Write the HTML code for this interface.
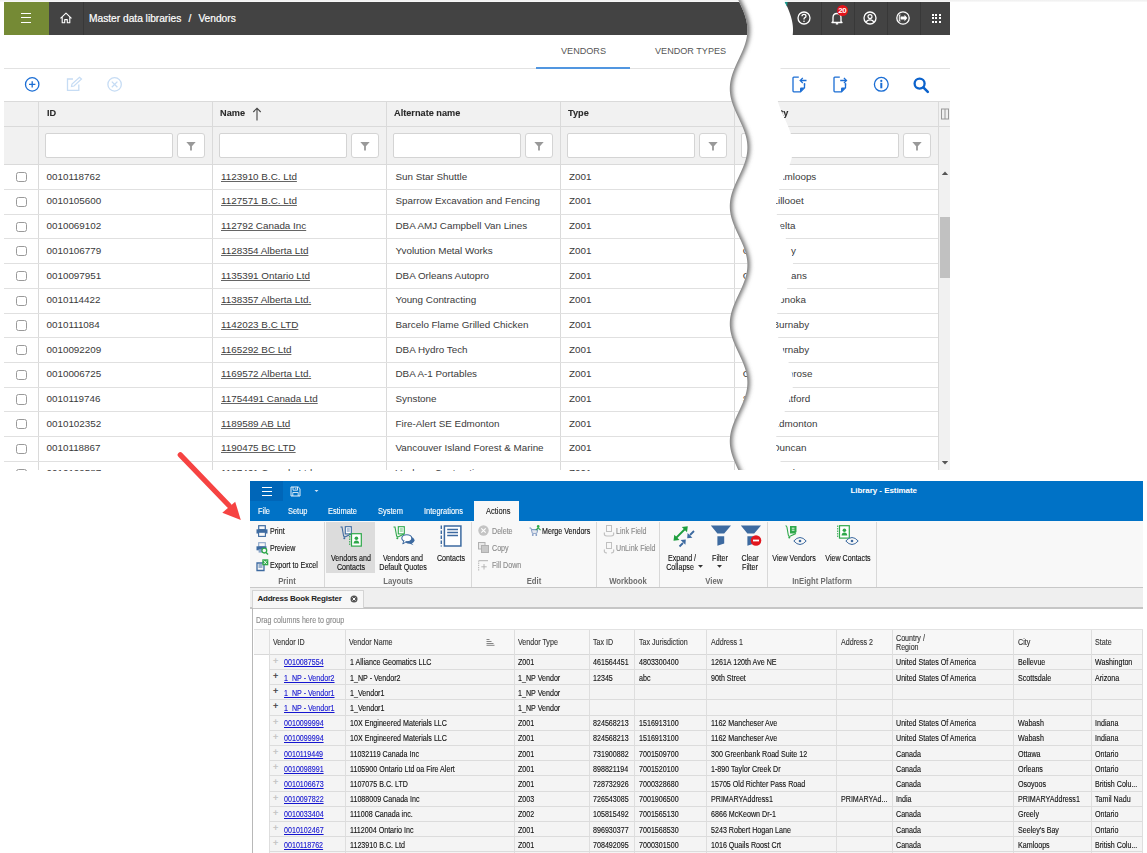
<!DOCTYPE html><html><head><meta charset="utf-8"><style>
*{margin:0;padding:0;box-sizing:border-box}
html,body{width:1147px;height:853px;overflow:hidden;background:#fff;font-family:"Liberation Sans",sans-serif}
.ab{position:absolute}
.t{position:absolute;white-space:nowrap;line-height:1}
.s1{color:#3a3a3a;font-size:9.85px}
.hd{font-weight:bold;color:#2a2a2a;font-size:9.9px;transform:scaleX(.93);transform-origin:0 0;-webkit-text-stroke:0.1px #2a2a2a}
.lk{text-decoration:underline;text-decoration-color:#666}
.g2{font-size:8.4px;transform:scaleX(.85);transform-origin:0 0;color:#111;-webkit-text-stroke:0.12px currentColor}
.gc{transform-origin:50% 0}

</style></head><body>
<div class="ab" style="left:0;top:0;width:1147px;height:2px;background:linear-gradient(#efefef,#fafafa)"></div>
<div class="ab" style="left:4px;top:2px;width:946px;height:32.5px;background:#434343"></div>
<div class="ab" style="left:4px;top:2px;width:45px;height:32.5px;background:#758a35"></div>
<div class="ab" style="left:20.8px;top:13px;width:10.2px;height:1.1px;background:#fff"></div>
<div class="ab" style="left:20.8px;top:17.4px;width:10.2px;height:1.1px;background:#fff"></div>
<div class="ab" style="left:20.8px;top:22px;width:10.2px;height:1.1px;background:#fff"></div>
<div class="ab" style="left:82.5px;top:2px;width:1px;height:32.5px;background:#383838"></div>
<svg class="ab" style="left:59px;top:12px" width="14" height="13" viewBox="0 0 14 13"><path d="M1.5 6.3 L7 1.2 L12.5 6.3 M3.2 5 V10.8 H5.7 V7.6 H8.3 V10.8 H10.8 V5" fill="none" stroke="#fff" stroke-width="1.1" stroke-linejoin="round"/></svg>
<div class="t" style="left:89px;top:13.7px;color:#fff;font-size:10.2px;-webkit-text-stroke:0.2px #fff">Master data libraries</div>
<div class="t" style="left:188.6px;top:13.7px;color:#fff;font-size:10.2px;-webkit-text-stroke:0.2px #fff">/</div>
<div class="t" style="left:198.4px;top:13.7px;color:#fff;font-size:10.2px;-webkit-text-stroke:0.2px #fff">Vendors</div>
<div class="ab" style="left:820.5px;top:2px;width:1px;height:32.5px;background:#383838"></div>
<div class="ab" style="left:853.5px;top:2px;width:1px;height:32.5px;background:#383838"></div>
<div class="ab" style="left:886.7px;top:2px;width:1px;height:32.5px;background:#383838"></div>
<div class="ab" style="left:919.7px;top:2px;width:1px;height:32.5px;background:#383838"></div>
<svg class="ab" style="left:796px;top:10px" width="16" height="16" viewBox="0 0 16 16"><circle cx="8" cy="8" r="6" fill="none" stroke="#fff" stroke-width="1.3"/><path d="M6 6.3 Q6 4.4 8 4.4 Q10 4.4 10 6.2 Q10 7.3 8.6 7.9 Q8 8.2 8 9.4" fill="none" stroke="#fff" stroke-width="1.3"/><circle cx="8" cy="11.3" r="0.8" fill="#fff"/></svg>
<svg class="ab" style="left:829px;top:10px" width="16" height="16" viewBox="0 0 16 16"><path d="M4 11.5 V7.5 Q4 3.5 8 3.5 Q12 3.5 12 7.5 V11.5 L13 12.5 H3 Z" fill="none" stroke="#fff" stroke-width="1.3" stroke-linejoin="round"/><path d="M6.8 13.8 H9.2" stroke="#fff" stroke-width="1.4"/></svg>
<div class="ab" style="left:837.3px;top:5.2px;width:11px;height:11px;border-radius:50%;background:#e3131b"></div>
<div class="t" style="left:838.2px;top:7px;color:#fff;font-size:8px;font-weight:bold;letter-spacing:-0.3px">20</div>
<svg class="ab" style="left:862px;top:10px" width="16" height="16" viewBox="0 0 16 16"><circle cx="8" cy="8" r="6" fill="none" stroke="#fff" stroke-width="1.3"/><circle cx="8" cy="6.6" r="2" fill="none" stroke="#fff" stroke-width="1.2"/><path d="M4.3 12.2 Q5 9.8 8 9.8 Q11 9.8 11.7 12.2" fill="none" stroke="#fff" stroke-width="1.2"/></svg>
<svg class="ab" style="left:895px;top:10px" width="16" height="16" viewBox="0 0 16 16"><circle cx="8" cy="8" r="6.2" fill="none" stroke="#fff" stroke-width="1.3"/><path d="M9.5 4.8 V6.5 H5.5 V9.5 H9.5 V11.2 L12.3 8 Z" fill="#fff"/><path d="M5.5 5 H4.3 V11 H5.5" fill="none" stroke="#fff" stroke-width="1"/></svg>
<div class="ab" style="left:932.0px;top:14.0px;width:2px;height:2px;background:#fff"></div>
<div class="ab" style="left:932.0px;top:17.3px;width:2px;height:2px;background:#fff"></div>
<div class="ab" style="left:932.0px;top:20.6px;width:2px;height:2px;background:#fff"></div>
<div class="ab" style="left:935.3px;top:14.0px;width:2px;height:2px;background:#fff"></div>
<div class="ab" style="left:935.3px;top:17.3px;width:2px;height:2px;background:#fff"></div>
<div class="ab" style="left:935.3px;top:20.6px;width:2px;height:2px;background:#fff"></div>
<div class="ab" style="left:938.6px;top:14.0px;width:2px;height:2px;background:#fff"></div>
<div class="ab" style="left:938.6px;top:17.3px;width:2px;height:2px;background:#fff"></div>
<div class="ab" style="left:938.6px;top:20.6px;width:2px;height:2px;background:#fff"></div>
<div class="t" style="left:561px;top:46.5px;color:#555;font-size:9.1px">VENDORS</div>
<div class="t" style="left:655px;top:46.5px;color:#555;font-size:9.1px">VENDOR TYPES</div>
<div class="ab" style="left:4px;top:68px;width:946px;height:1px;background:#e2e2e2"></div>
<div class="ab" style="left:536px;top:66.5px;width:94px;height:2px;background:#5196e0"></div>
<svg class="ab" style="left:24px;top:76px" width="17" height="17" viewBox="0 0 17 17"><circle cx="8.2" cy="8.4" r="6.7" fill="none" stroke="#1a6dd4" stroke-width="1.3"/><path d="M8.2 5.2 V11.6 M5 8.4 H11.4" stroke="#1a6dd4" stroke-width="1.3"/></svg>
<svg class="ab" style="left:66px;top:76px" width="17" height="17" viewBox="0 0 17 17"><path d="M7 3 H1.5 V14.3 H12.8 V8.5" fill="none" stroke="#c6dcf4" stroke-width="1.3"/><path d="M5.5 10.5 L6 8 L13.5 1.2 L15.5 3 L8 10 Z" fill="none" stroke="#c6dcf4" stroke-width="1.2"/></svg>
<svg class="ab" style="left:106px;top:76px" width="17" height="17" viewBox="0 0 17 17"><circle cx="8.6" cy="8.4" r="6.7" fill="none" stroke="#c6dcf4" stroke-width="1.3"/><path d="M5.8 5.6 L11.4 11.2 M11.4 5.6 L5.8 11.2" stroke="#c6dcf4" stroke-width="1.3"/></svg>
<svg class="ab" style="left:791.5px;top:75.5px" width="16" height="17" viewBox="0 0 16 17"><path d="M6.8 1.2 H1.8 Q1 1.2 1 2 V15 Q1 15.8 1.8 15.8 H8.6 L12.5 11.9 V7.5" fill="none" stroke="#1a6dd4" stroke-width="1.3" stroke-linejoin="round"/><path d="M8 15.9 V12.6 Q8 11.4 9.2 11.4 H12.6 Z" fill="#1a6dd4"/><path d="M12.5 7.2 V9.5" stroke="#1a6dd4" stroke-width="1.3"/><path d="M14.5 4.5 H8.2 M10.8 1.9 L8.2 4.5 L10.8 7.1" fill="none" stroke="#1a6dd4" stroke-width="1.3"/></svg>
<svg class="ab" style="left:832.5px;top:75.5px" width="16" height="17" viewBox="0 0 16 17"><path d="M6.8 1.2 H1.8 Q1 1.2 1 2 V15 Q1 15.8 1.8 15.8 H8.6 L12.5 11.9 V7.5" fill="none" stroke="#1a6dd4" stroke-width="1.3" stroke-linejoin="round"/><path d="M8 15.9 V12.6 Q8 11.4 9.2 11.4 H12.6 Z" fill="#1a6dd4"/><path d="M12.5 7.2 V9.5" stroke="#1a6dd4" stroke-width="1.3"/><path d="M7.2 4.5 H13.5 M10.9 1.9 L13.5 4.5 L10.9 7.1" fill="none" stroke="#1a6dd4" stroke-width="1.3"/></svg>
<svg class="ab" style="left:872.5px;top:75.5px" width="17" height="17" viewBox="0 0 17 17"><circle cx="8.3" cy="8.3" r="6.9" fill="none" stroke="#1a6dd4" stroke-width="1.3"/><circle cx="8.3" cy="4.9" r="1.1" fill="#1a6dd4"/><path d="M8.3 6.8 V12.3" stroke="#1a6dd4" stroke-width="2"/></svg>
<svg class="ab" style="left:913px;top:76.5px" width="17" height="17" viewBox="0 0 17 17"><circle cx="6.6" cy="6.6" r="5" fill="none" stroke="#0b62cc" stroke-width="2.3"/><path d="M10.3 10.3 L14.8 14.8" stroke="#0b62cc" stroke-width="2.6" stroke-linecap="round"/></svg>
<div class="ab" style="left:4px;top:101px;width:946px;height:63px;background:#f1f1f1"></div>
<div class="ab" style="left:4px;top:101px;width:946px;height:1px;background:#dadada"></div>
<div class="ab" style="left:4px;top:126px;width:946px;height:1px;background:#dadada"></div>
<div class="ab" style="left:4px;top:163.5px;width:946px;height:1px;background:#dadada"></div>
<div class="ab" style="left:938.3px;top:164px;width:11.7px;height:306px;background:#f1f1f1"></div>
<div class="ab" style="left:38px;top:101px;width:1px;height:369px;background:#dadada"></div>
<div class="ab" style="left:212px;top:101px;width:1px;height:369px;background:#dadada"></div>
<div class="ab" style="left:386px;top:101px;width:1px;height:369px;background:#dadada"></div>
<div class="ab" style="left:560px;top:101px;width:1px;height:369px;background:#dadada"></div>
<div class="ab" style="left:734px;top:101px;width:1px;height:369px;background:#dadada"></div>
<div class="ab" style="left:938px;top:101px;width:1px;height:369px;background:#dadada"></div>
<div class="t hd" style="left:46.5px;top:108.3px">ID</div>
<div class="t hd" style="left:219.6px;top:108.3px">Name</div>
<div class="t hd" style="left:393.5px;top:108.3px">Alternate name</div>
<div class="t hd" style="left:567.6px;top:108.3px">Type</div>
<div class="t hd" style="left:771px;top:108.3px">City</div>
<svg class="ab" style="left:251px;top:106px" width="12" height="16" viewBox="0 0 12 16"><path d="M6 14.5 V2.5 M2.3 6 L6 2.2 L9.7 6" fill="none" stroke="#444" stroke-width="1.1"/></svg>
<svg class="ab" style="left:940px;top:108px" width="10" height="12" viewBox="0 0 10 12"><rect x="1.5" y="1" width="7" height="10" fill="none" stroke="#999" stroke-width="1"/><path d="M5 1 V11" stroke="#999" stroke-width="1"/></svg>
<div class="ab" style="left:45px;top:133.3px;width:127.5px;height:24.5px;background:#fff;border:1px solid #d4d4d4;border-radius:2px"></div>
<div class="ab" style="left:177px;top:133.3px;width:28px;height:24.5px;background:#fff;border:1px solid #d4d4d4;border-radius:3px"></div>
<svg class="ab" style="left:185.0px;top:139.5px" width="12" height="12" viewBox="0 0 12 12"><path d="M1.3 2 H10.7 L6.9 6.3 V10.5 H5.1 V6.3 Z" fill="#999"/></svg>
<div class="ab" style="left:219px;top:133.3px;width:127.5px;height:24.5px;background:#fff;border:1px solid #d4d4d4;border-radius:2px"></div>
<div class="ab" style="left:351px;top:133.3px;width:28px;height:24.5px;background:#fff;border:1px solid #d4d4d4;border-radius:3px"></div>
<svg class="ab" style="left:359.0px;top:139.5px" width="12" height="12" viewBox="0 0 12 12"><path d="M1.3 2 H10.7 L6.9 6.3 V10.5 H5.1 V6.3 Z" fill="#999"/></svg>
<div class="ab" style="left:393px;top:133.3px;width:127.5px;height:24.5px;background:#fff;border:1px solid #d4d4d4;border-radius:2px"></div>
<div class="ab" style="left:525px;top:133.3px;width:28px;height:24.5px;background:#fff;border:1px solid #d4d4d4;border-radius:3px"></div>
<svg class="ab" style="left:533.0px;top:139.5px" width="12" height="12" viewBox="0 0 12 12"><path d="M1.3 2 H10.7 L6.9 6.3 V10.5 H5.1 V6.3 Z" fill="#999"/></svg>
<div class="ab" style="left:567px;top:133.3px;width:127.5px;height:24.5px;background:#fff;border:1px solid #d4d4d4;border-radius:2px"></div>
<div class="ab" style="left:699px;top:133.3px;width:28px;height:24.5px;background:#fff;border:1px solid #d4d4d4;border-radius:3px"></div>
<svg class="ab" style="left:707.0px;top:139.5px" width="12" height="12" viewBox="0 0 12 12"><path d="M1.3 2 H10.7 L6.9 6.3 V10.5 H5.1 V6.3 Z" fill="#999"/></svg>
<div class="ab" style="left:741px;top:133.3px;width:157.5px;height:24.5px;background:#fff;border:1px solid #d4d4d4;border-radius:2px"></div>
<div class="ab" style="left:903px;top:133.3px;width:28px;height:24.5px;background:#fff;border:1px solid #d4d4d4;border-radius:3px"></div>
<svg class="ab" style="left:911.0px;top:139.5px" width="12" height="12" viewBox="0 0 12 12"><path d="M1.3 2 H10.7 L6.9 6.3 V10.5 H5.1 V6.3 Z" fill="#999"/></svg>
<div class="ab" style="left:4px;top:189.0px;width:934px;height:1px;background:#e0e0e0"></div>
<div class="ab" style="left:16.2px;top:172.1px;width:10.5px;height:10.3px;border:1.2px solid #9a9a9a;border-radius:2.5px"></div>
<div class="t s1" style="left:46.5px;top:171.7px">0010118762</div>
<div class="t s1 lk" style="left:221px;top:171.7px">1123910 B.C. Ltd</div>
<div class="t s1" style="left:395.5px;top:171.7px">Sun Star Shuttle</div>
<div class="t s1" style="left:569px;top:171.7px">Z001</div>
<div class="t s1" style="left:772.5px;top:171.7px">Kamloops</div>
<div class="ab" style="left:4px;top:213.7px;width:934px;height:1px;background:#e0e0e0"></div>
<div class="ab" style="left:16.2px;top:196.79999999999998px;width:10.5px;height:10.3px;border:1.2px solid #9a9a9a;border-radius:2.5px"></div>
<div class="t s1" style="left:46.5px;top:196.39999999999998px">0010105600</div>
<div class="t s1 lk" style="left:221px;top:196.39999999999998px">1127571 B.C. Ltd</div>
<div class="t s1" style="left:395.5px;top:196.39999999999998px">Sparrow Excavation and Fencing</div>
<div class="t s1" style="left:569px;top:196.39999999999998px">Z001</div>
<div class="t s1" style="left:772.5px;top:196.39999999999998px">Lillooet</div>
<div class="ab" style="left:4px;top:238.4px;width:934px;height:1px;background:#e0e0e0"></div>
<div class="ab" style="left:16.2px;top:221.5px;width:10.5px;height:10.3px;border:1.2px solid #9a9a9a;border-radius:2.5px"></div>
<div class="t s1" style="left:46.5px;top:221.1px">0010069102</div>
<div class="t s1 lk" style="left:221px;top:221.1px">112792 Canada Inc</div>
<div class="t s1" style="left:395.5px;top:221.1px">DBA AMJ Campbell Van Lines</div>
<div class="t s1" style="left:569px;top:221.1px">Z001</div>
<div class="t s1" style="left:772.5px;top:221.1px">Delta</div>
<div class="ab" style="left:4px;top:263.1px;width:934px;height:1px;background:#e0e0e0"></div>
<div class="ab" style="left:16.2px;top:246.20000000000002px;width:10.5px;height:10.3px;border:1.2px solid #9a9a9a;border-radius:2.5px"></div>
<div class="t s1" style="left:46.5px;top:245.79999999999998px">0010106779</div>
<div class="t s1 lk" style="left:221px;top:245.79999999999998px">1128354 Alberta Ltd</div>
<div class="t s1" style="left:395.5px;top:245.79999999999998px">Yvolution Metal Works</div>
<div class="t s1" style="left:569px;top:245.79999999999998px">Z001</div>
<div class="t s1" style="left:791px;top:245.79999999999998px">y</div>
<div class="t s1" style="left:742.8px;top:245.79999999999998px">C</div>
<div class="ab" style="left:4px;top:287.8px;width:934px;height:1px;background:#e0e0e0"></div>
<div class="ab" style="left:16.2px;top:270.90000000000003px;width:10.5px;height:10.3px;border:1.2px solid #9a9a9a;border-radius:2.5px"></div>
<div class="t s1" style="left:46.5px;top:270.5px">0010097951</div>
<div class="t s1 lk" style="left:221px;top:270.5px">1135391 Ontario Ltd</div>
<div class="t s1" style="left:395.5px;top:270.5px">DBA Orleans Autopro</div>
<div class="t s1" style="left:569px;top:270.5px">Z001</div>
<div class="t s1" style="left:772.5px;top:270.5px">Orleans</div>
<div class="t s1" style="left:742.8px;top:270.5px">C</div>
<div class="ab" style="left:4px;top:312.5px;width:934px;height:1px;background:#e0e0e0"></div>
<div class="ab" style="left:16.2px;top:295.6px;width:10.5px;height:10.3px;border:1.2px solid #9a9a9a;border-radius:2.5px"></div>
<div class="t s1" style="left:46.5px;top:295.2px">0010114422</div>
<div class="t s1 lk" style="left:221px;top:295.2px">1138357 Alberta Ltd.</div>
<div class="t s1" style="left:395.5px;top:295.2px">Young Contracting</div>
<div class="t s1" style="left:569px;top:295.2px">Z001</div>
<div class="t s1" style="left:772.5px;top:295.2px">Ponoka</div>
<div class="ab" style="left:4px;top:337.2px;width:934px;height:1px;background:#e0e0e0"></div>
<div class="ab" style="left:16.2px;top:320.3px;width:10.5px;height:10.3px;border:1.2px solid #9a9a9a;border-radius:2.5px"></div>
<div class="t s1" style="left:46.5px;top:319.9px">0010111084</div>
<div class="t s1 lk" style="left:221px;top:319.9px">1142023 B.C LTD</div>
<div class="t s1" style="left:395.5px;top:319.9px">Barcelo Flame Grilled Chicken</div>
<div class="t s1" style="left:569px;top:319.9px">Z001</div>
<div class="t s1" style="left:772.5px;top:319.9px">Burnaby</div>
<div class="ab" style="left:4px;top:361.9px;width:934px;height:1px;background:#e0e0e0"></div>
<div class="ab" style="left:16.2px;top:345.0px;width:10.5px;height:10.3px;border:1.2px solid #9a9a9a;border-radius:2.5px"></div>
<div class="t s1" style="left:46.5px;top:344.6px">0010092209</div>
<div class="t s1 lk" style="left:221px;top:344.6px">1165292 BC Ltd</div>
<div class="t s1" style="left:395.5px;top:344.6px">DBA Hydro Tech</div>
<div class="t s1" style="left:569px;top:344.6px">Z001</div>
<div class="t s1" style="left:772.5px;top:344.6px">Burnaby</div>
<div class="ab" style="left:4px;top:386.6px;width:934px;height:1px;background:#e0e0e0"></div>
<div class="ab" style="left:16.2px;top:369.70000000000005px;width:10.5px;height:10.3px;border:1.2px solid #9a9a9a;border-radius:2.5px"></div>
<div class="t s1" style="left:46.5px;top:369.29999999999995px">0010006725</div>
<div class="t s1 lk" style="left:221px;top:369.29999999999995px">1169572 Alberta Ltd.</div>
<div class="t s1" style="left:395.5px;top:369.29999999999995px">DBA A-1 Portables</div>
<div class="t s1" style="left:569px;top:369.29999999999995px">Z001</div>
<div class="t s1" style="left:772.5px;top:369.29999999999995px">Camrose</div>
<div class="t s1" style="left:742.8px;top:369.29999999999995px">C</div>
<div class="ab" style="left:4px;top:411.29999999999995px;width:934px;height:1px;background:#e0e0e0"></div>
<div class="ab" style="left:16.2px;top:394.4px;width:10.5px;height:10.3px;border:1.2px solid #9a9a9a;border-radius:2.5px"></div>
<div class="t s1" style="left:46.5px;top:394.0px">0010119746</div>
<div class="t s1 lk" style="left:221px;top:394.0px">11754491 Canada Ltd</div>
<div class="t s1" style="left:395.5px;top:394.0px">Synstone</div>
<div class="t s1" style="left:569px;top:394.0px">Z001</div>
<div class="t s1" style="left:772.5px;top:394.0px">Stratford</div>
<div class="t s1" style="left:742.8px;top:394.0px">S</div>
<div class="ab" style="left:4px;top:436.0px;width:934px;height:1px;background:#e0e0e0"></div>
<div class="ab" style="left:16.2px;top:419.1px;width:10.5px;height:10.3px;border:1.2px solid #9a9a9a;border-radius:2.5px"></div>
<div class="t s1" style="left:46.5px;top:418.7px">0010102352</div>
<div class="t s1 lk" style="left:221px;top:418.7px">1189589 AB Ltd</div>
<div class="t s1" style="left:395.5px;top:418.7px">Fire-Alert SE Edmonton</div>
<div class="t s1" style="left:569px;top:418.7px">Z001</div>
<div class="t s1" style="left:772.5px;top:418.7px">Edmonton</div>
<div class="ab" style="left:4px;top:460.7px;width:934px;height:1px;background:#e0e0e0"></div>
<div class="ab" style="left:16.2px;top:443.8px;width:10.5px;height:10.3px;border:1.2px solid #9a9a9a;border-radius:2.5px"></div>
<div class="t s1" style="left:46.5px;top:443.4px">0010118867</div>
<div class="t s1 lk" style="left:221px;top:443.4px">1190475 BC LTD</div>
<div class="t s1" style="left:395.5px;top:443.4px">Vancouver Island Forest &amp; Marine</div>
<div class="t s1" style="left:569px;top:443.4px">Z001</div>
<div class="t s1" style="left:772.5px;top:443.4px">Duncan</div>
<div class="ab" style="left:4px;top:485.4px;width:934px;height:1px;background:#e0e0e0"></div>
<div class="ab" style="left:16.2px;top:468.5px;width:10.5px;height:10.3px;border:1.2px solid #9a9a9a;border-radius:2.5px"></div>
<div class="t s1" style="left:46.5px;top:468.09999999999997px">0010109587</div>
<div class="t s1 lk" style="left:221px;top:468.09999999999997px">1197461 Canada Ltd</div>
<div class="t s1" style="left:395.5px;top:468.09999999999997px">Vanhorn Contracting</div>
<div class="t s1" style="left:569px;top:468.09999999999997px">Z001</div>
<div class="t s1" style="left:772.5px;top:468.09999999999997px">Kamloops</div>
<svg class="ab" style="left:941px;top:169.5px" width="8" height="6" viewBox="0 0 8 6"><path d="M0.8 5 L4 1.5 L7.2 5 Z" fill="#555"/></svg>
<div class="ab" style="left:940px;top:216.5px;width:10px;height:61.7px;background:#c1c1c1"></div>
<svg class="ab" style="left:941px;top:459.5px" width="8" height="6" viewBox="0 0 8 6"><path d="M0.8 1 L4 4.5 L7.2 1 Z" fill="#555"/></svg>
<div class="ab" style="left:0;top:470.6px;width:1147px;height:384px;background:#fff"></div>
<div class="ab" style="left:950px;top:2px;width:197px;height:470px;background:#fff"></div>
<div class="ab" style="left:0;top:2px;width:4px;height:470px;background:#fff"></div>
<svg class="ab" style="left:0;top:0" width="1147" height="480" viewBox="0 0 1147 480">
<defs><filter id="bl" x="-50%" y="-10%" width="200%" height="120%"><feGaussianBlur stdDeviation="1.9"/></filter>
<clipPath id="gap"><polygon points="738.31,0 738.78,1 739.25,2 739.71,3 740.18,4 740.64,5 741.09,6 741.54,7 741.98,8 742.41,9 742.83,10 743.24,11 743.63,12 744.01,13 744.37,14 744.72,15 745.05,16 745.36,17 745.65,18 745.92,19 746.17,20 746.40,21 746.61,22 746.79,23 746.95,24 747.09,25 747.20,26 747.29,27 747.35,28 747.39,29 747.40,30 747.39,31 747.35,32 747.29,33 747.20,34 747.09,35 746.95,36 746.79,37 746.61,38 746.40,39 746.17,40 745.92,41 745.65,42 745.36,43 745.05,44 744.72,45 744.37,46 744.01,47 743.63,48 743.24,49 742.83,50 742.41,51 741.98,52 741.54,53 741.09,54 740.64,55 740.18,56 739.71,57 739.25,58 738.78,59 738.31,60 737.84,61 737.37,62 736.90,63 736.45,64 735.99,65 735.55,66 735.11,67 734.68,68 734.27,69 733.86,70 733.48,71 733.10,72 732.74,73 732.40,74 732.07,75 731.77,76 731.48,77 731.21,78 730.97,79 730.75,80 730.54,81 730.37,82 730.21,83 730.08,84 729.98,85 729.89,86 729.84,87 729.81,88 729.80,89 729.82,90 729.86,91 729.93,92 730.03,93 730.14,94 730.29,95 730.45,96 730.64,97 730.85,98 731.09,99 731.34,100 731.62,101 731.92,102 732.23,103 732.57,104 732.92,105 733.29,106 733.67,107 734.06,108 734.47,109 734.90,110 735.33,111 735.77,112 736.22,113 736.67,114 737.14,115 737.60,116 738.07,117 738.54,118 739.01,119 739.48,120 739.95,121 740.41,122 740.87,123 741.32,124 741.76,125 742.20,126 742.62,127 743.03,128 743.43,129 743.82,130 744.19,131 744.55,132 744.88,133 745.20,134 745.51,135 745.79,136 746.05,137 746.29,138 746.51,139 746.70,140 746.87,141 747.02,142 747.15,143 747.25,144 747.32,145 747.37,146 747.40,147 747.40,148 747.37,149 747.32,150 747.25,151 747.15,152 747.02,153 746.87,154 746.70,155 746.51,156 746.29,157 746.05,158 745.79,159 745.51,160 745.20,161 744.88,162 744.55,163 744.19,164 743.82,165 743.43,166 743.03,167 742.62,168 742.20,169 741.76,170 741.32,171 740.87,172 740.41,173 739.95,174 739.48,175 739.01,176 738.54,177 738.07,178 737.60,179 737.14,180 736.67,181 736.22,182 735.77,183 735.33,184 734.90,185 734.47,186 734.06,187 733.67,188 733.29,189 732.92,190 732.57,191 732.23,192 731.92,193 731.62,194 731.34,195 731.09,196 730.85,197 730.64,198 730.45,199 730.29,200 730.14,201 730.03,202 729.93,203 729.86,204 729.82,205 729.80,206 729.81,207 729.84,208 729.89,209 729.98,210 730.08,211 730.21,212 730.37,213 730.54,214 730.75,215 730.97,216 731.21,217 731.48,218 731.77,219 732.07,220 732.40,221 732.74,222 733.10,223 733.48,224 733.86,225 734.27,226 734.68,227 735.11,228 735.55,229 735.99,230 736.45,231 736.90,232 737.37,233 737.84,234 738.31,235 738.78,236 739.25,237 739.71,238 740.18,239 740.64,240 741.09,241 741.54,242 741.98,243 742.41,244 742.83,245 743.24,246 743.63,247 744.01,248 744.37,249 744.72,250 745.05,251 745.36,252 745.65,253 745.92,254 746.17,255 746.40,256 746.61,257 746.79,258 746.95,259 747.09,260 747.20,261 747.29,262 747.35,263 747.39,264 747.40,265 747.39,266 747.35,267 747.29,268 747.20,269 747.09,270 746.95,271 746.79,272 746.61,273 746.40,274 746.17,275 745.92,276 745.65,277 745.36,278 745.05,279 744.72,280 744.37,281 744.01,282 743.63,283 743.24,284 742.83,285 742.41,286 741.98,287 741.54,288 741.09,289 740.64,290 740.18,291 739.71,292 739.25,293 738.78,294 738.31,295 737.84,296 737.37,297 736.90,298 736.45,299 735.99,300 735.55,301 735.11,302 734.68,303 734.27,304 733.86,305 733.48,306 733.10,307 732.74,308 732.40,309 732.07,310 731.77,311 731.48,312 731.21,313 730.97,314 730.75,315 730.54,316 730.37,317 730.21,318 730.08,319 729.98,320 729.89,321 729.84,322 729.81,323 729.80,324 729.82,325 729.86,326 729.93,327 730.03,328 730.14,329 730.29,330 730.45,331 730.64,332 730.85,333 731.09,334 731.34,335 731.62,336 731.92,337 732.23,338 732.57,339 732.92,340 733.29,341 733.67,342 734.06,343 734.47,344 734.90,345 735.33,346 735.77,347 736.22,348 736.67,349 737.14,350 737.60,351 738.07,352 738.54,353 739.01,354 739.48,355 739.95,356 740.41,357 740.87,358 741.32,359 741.76,360 742.20,361 742.62,362 743.03,363 743.43,364 743.82,365 744.19,366 744.55,367 744.88,368 745.20,369 745.51,370 745.79,371 746.05,372 746.29,373 746.51,374 746.70,375 746.87,376 747.02,377 747.15,378 747.25,379 747.32,380 747.37,381 747.40,382 747.40,383 747.37,384 747.32,385 747.25,386 747.15,387 747.02,388 746.87,389 746.70,390 746.51,391 746.29,392 746.05,393 745.79,394 745.51,395 745.20,396 744.88,397 744.55,398 744.19,399 743.82,400 743.43,401 743.03,402 742.62,403 742.20,404 741.76,405 741.32,406 740.87,407 740.41,408 739.95,409 739.48,410 739.01,411 738.54,412 738.07,413 737.60,414 737.14,415 736.67,416 736.22,417 735.77,418 735.33,419 734.90,420 734.47,421 734.06,422 733.67,423 733.29,424 732.92,425 732.57,426 732.23,427 731.92,428 731.62,429 731.34,430 731.09,431 730.85,432 730.64,433 730.45,434 730.29,435 730.14,436 730.03,437 729.93,438 729.86,439 729.82,440 729.80,441 729.81,442 729.84,443 729.89,444 729.98,445 730.08,446 730.21,447 730.37,448 730.54,449 730.75,450 730.97,451 731.21,452 731.48,453 731.77,454 732.07,455 732.40,456 732.74,457 733.10,458 733.48,459 733.86,460 734.27,461 734.68,462 735.11,463 735.55,464 735.99,465 736.45,466 736.90,467 737.37,468 737.84,469 738.31,470 738.78,471 739.25,472 739.71,473 740.18,474 740.64,475 741.09,476 741.54,477 741.98,478 742.41,479 742.83,480 788.58,480 788.18,479 787.77,478 787.34,477 786.91,476 786.47,475 786.03,474 785.58,473 785.12,472 784.67,471 784.22,470 783.76,469 783.31,468 782.86,467 782.42,466 781.98,465 781.55,464 781.13,463 780.72,462 780.32,461 779.93,460 779.55,459 779.19,458 778.84,457 778.51,456 778.20,455 777.90,454 777.62,453 777.37,452 777.13,451 776.91,450 776.72,449 776.55,448 776.40,447 776.27,446 776.17,445 776.09,444 776.04,443 776.01,442 776.00,441 776.02,440 776.06,439 776.13,438 776.22,437 776.33,436 776.47,435 776.63,434 776.81,433 777.02,432 777.25,431 777.49,430 777.76,429 778.05,428 778.35,427 778.67,426 779.01,425 779.37,424 779.74,423 780.12,422 780.52,421 780.92,420 781.34,419 781.77,418 782.20,417 782.64,416 783.09,415 783.54,414 783.99,413 784.44,412 784.90,411 785.35,410 785.80,409 786.25,408 786.69,407 787.13,406 787.55,405 787.97,404 788.38,403 788.78,402 789.17,401 789.54,400 789.90,399 790.24,398 790.57,397 790.88,396 791.17,395 791.44,394 791.69,393 791.93,392 792.14,391 792.33,390 792.49,389 792.64,388 792.76,387 792.85,386 792.92,385 792.97,384 793.00,383 793.00,382 792.97,381 792.92,380 792.85,379 792.76,378 792.64,377 792.49,376 792.33,375 792.14,374 791.93,373 791.69,372 791.44,371 791.17,370 790.88,369 790.57,368 790.24,367 789.90,366 789.54,365 789.17,364 788.78,363 788.38,362 787.97,361 787.55,360 787.13,359 786.69,358 786.25,357 785.80,356 785.35,355 784.90,354 784.44,353 783.99,352 783.54,351 783.09,350 782.64,349 782.20,348 781.77,347 781.34,346 780.92,345 780.52,344 780.12,343 779.74,342 779.37,341 779.01,340 778.67,339 778.35,338 778.05,337 777.76,336 777.49,335 777.25,334 777.02,333 776.81,332 776.63,331 776.47,330 776.33,329 776.22,328 776.13,327 776.06,326 776.02,325 776.00,324 776.01,323 776.04,322 776.09,321 776.17,320 776.27,319 776.40,318 776.55,317 776.72,316 776.91,315 777.13,314 777.37,313 777.62,312 777.90,311 778.20,310 778.51,309 778.84,308 779.19,307 779.55,306 779.93,305 780.32,304 780.72,303 781.13,302 781.55,301 781.98,300 782.42,299 782.86,298 783.31,297 783.76,296 784.22,295 784.67,294 785.12,293 785.58,292 786.03,291 786.47,290 786.91,289 787.34,288 787.77,287 788.18,286 788.58,285 788.98,284 789.36,283 789.72,282 790.07,281 790.41,280 790.73,279 791.03,278 791.31,277 791.57,276 791.81,275 792.03,274 792.23,273 792.41,272 792.57,271 792.70,270 792.81,269 792.89,268 792.95,267 792.99,266 793.00,265 792.99,264 792.95,263 792.89,262 792.81,261 792.70,260 792.57,259 792.41,258 792.23,257 792.03,256 791.81,255 791.57,254 791.31,253 791.03,252 790.73,251 790.41,250 790.07,249 789.72,248 789.36,247 788.98,246 788.58,245 788.18,244 787.77,243 787.34,242 786.91,241 786.47,240 786.03,239 785.58,238 785.12,237 784.67,236 784.22,235 783.76,234 783.31,233 782.86,232 782.42,231 781.98,230 781.55,229 781.13,228 780.72,227 780.32,226 779.93,225 779.55,224 779.19,223 778.84,222 778.51,221 778.20,220 777.90,219 777.62,218 777.37,217 777.13,216 776.91,215 776.72,214 776.55,213 776.40,212 776.27,211 776.17,210 776.09,209 776.04,208 776.01,207 776.00,206 776.02,205 776.06,204 776.13,203 776.22,202 776.33,201 776.47,200 776.63,199 776.81,198 777.02,197 777.25,196 777.49,195 777.76,194 778.05,193 778.35,192 778.67,191 779.01,190 779.37,189 779.74,188 780.12,187 780.52,186 780.92,185 781.34,184 781.77,183 782.20,182 782.64,181 783.09,180 783.54,179 783.99,178 784.44,177 784.90,176 785.35,175 785.80,174 786.25,173 786.69,172 787.13,171 787.55,170 787.97,169 788.38,168 788.78,167 789.17,166 789.54,165 789.90,164 790.24,163 790.57,162 790.88,161 791.17,160 791.44,159 791.69,158 791.93,157 792.14,156 792.33,155 792.49,154 792.64,153 792.76,152 792.85,151 792.92,150 792.97,149 793.00,148 793.00,147 792.97,146 792.92,145 792.85,144 792.76,143 792.64,142 792.49,141 792.33,140 792.14,139 791.93,138 791.69,137 791.44,136 791.17,135 790.88,134 790.57,133 790.24,132 789.90,131 789.54,130 789.17,129 788.78,128 788.38,127 787.97,126 787.55,125 787.13,124 786.69,123 786.25,122 785.80,121 785.35,120 784.90,119 784.44,118 783.99,117 783.54,116 783.09,115 782.64,114 782.20,113 781.77,112 781.34,111 780.92,110 780.52,109 780.12,108 779.74,107 779.37,106 779.01,105 778.67,104 778.35,103 778.05,102 777.76,101 777.49,100 777.25,99 777.02,98 776.81,97 776.63,96 776.47,95 776.33,94 776.22,93 776.13,92 776.06,91 776.02,90 776.00,89 776.01,88 776.04,87 776.09,86 776.17,85 776.27,84 776.40,83 776.55,82 776.72,81 776.91,80 777.13,79 777.37,78 777.62,77 777.90,76 778.20,75 778.51,74 778.84,73 779.19,72 779.55,71 779.93,70 780.32,69 780.72,68 781.13,67 781.55,66 781.98,65 782.42,64 782.86,63 783.31,62 783.76,61 784.22,60 784.67,59 785.12,58 785.58,57 786.03,56 786.47,55 786.91,54 787.34,53 787.77,52 788.18,51 788.58,50 788.98,49 789.36,48 789.72,47 790.07,46 790.41,45 790.73,44 791.03,43 791.31,42 791.57,41 791.81,40 792.03,39 792.23,38 792.41,37 792.57,36 792.70,35 792.81,34 792.89,33 792.95,32 792.99,31 793.00,30 792.99,29 792.95,28 792.89,27 792.81,26 792.70,25 792.57,24 792.41,23 792.23,22 792.03,21 791.81,20 791.57,19 791.31,18 791.03,17 790.73,16 790.41,15 790.07,14 789.72,13 789.36,12 788.98,11 788.58,10 788.18,9 787.77,8 787.34,7 786.91,6 786.47,5 786.03,4 785.58,3 785.12,2 784.67,1 784.22,0"/></clipPath></defs>
<polygon points="738.31,0 738.78,1 739.25,2 739.71,3 740.18,4 740.64,5 741.09,6 741.54,7 741.98,8 742.41,9 742.83,10 743.24,11 743.63,12 744.01,13 744.37,14 744.72,15 745.05,16 745.36,17 745.65,18 745.92,19 746.17,20 746.40,21 746.61,22 746.79,23 746.95,24 747.09,25 747.20,26 747.29,27 747.35,28 747.39,29 747.40,30 747.39,31 747.35,32 747.29,33 747.20,34 747.09,35 746.95,36 746.79,37 746.61,38 746.40,39 746.17,40 745.92,41 745.65,42 745.36,43 745.05,44 744.72,45 744.37,46 744.01,47 743.63,48 743.24,49 742.83,50 742.41,51 741.98,52 741.54,53 741.09,54 740.64,55 740.18,56 739.71,57 739.25,58 738.78,59 738.31,60 737.84,61 737.37,62 736.90,63 736.45,64 735.99,65 735.55,66 735.11,67 734.68,68 734.27,69 733.86,70 733.48,71 733.10,72 732.74,73 732.40,74 732.07,75 731.77,76 731.48,77 731.21,78 730.97,79 730.75,80 730.54,81 730.37,82 730.21,83 730.08,84 729.98,85 729.89,86 729.84,87 729.81,88 729.80,89 729.82,90 729.86,91 729.93,92 730.03,93 730.14,94 730.29,95 730.45,96 730.64,97 730.85,98 731.09,99 731.34,100 731.62,101 731.92,102 732.23,103 732.57,104 732.92,105 733.29,106 733.67,107 734.06,108 734.47,109 734.90,110 735.33,111 735.77,112 736.22,113 736.67,114 737.14,115 737.60,116 738.07,117 738.54,118 739.01,119 739.48,120 739.95,121 740.41,122 740.87,123 741.32,124 741.76,125 742.20,126 742.62,127 743.03,128 743.43,129 743.82,130 744.19,131 744.55,132 744.88,133 745.20,134 745.51,135 745.79,136 746.05,137 746.29,138 746.51,139 746.70,140 746.87,141 747.02,142 747.15,143 747.25,144 747.32,145 747.37,146 747.40,147 747.40,148 747.37,149 747.32,150 747.25,151 747.15,152 747.02,153 746.87,154 746.70,155 746.51,156 746.29,157 746.05,158 745.79,159 745.51,160 745.20,161 744.88,162 744.55,163 744.19,164 743.82,165 743.43,166 743.03,167 742.62,168 742.20,169 741.76,170 741.32,171 740.87,172 740.41,173 739.95,174 739.48,175 739.01,176 738.54,177 738.07,178 737.60,179 737.14,180 736.67,181 736.22,182 735.77,183 735.33,184 734.90,185 734.47,186 734.06,187 733.67,188 733.29,189 732.92,190 732.57,191 732.23,192 731.92,193 731.62,194 731.34,195 731.09,196 730.85,197 730.64,198 730.45,199 730.29,200 730.14,201 730.03,202 729.93,203 729.86,204 729.82,205 729.80,206 729.81,207 729.84,208 729.89,209 729.98,210 730.08,211 730.21,212 730.37,213 730.54,214 730.75,215 730.97,216 731.21,217 731.48,218 731.77,219 732.07,220 732.40,221 732.74,222 733.10,223 733.48,224 733.86,225 734.27,226 734.68,227 735.11,228 735.55,229 735.99,230 736.45,231 736.90,232 737.37,233 737.84,234 738.31,235 738.78,236 739.25,237 739.71,238 740.18,239 740.64,240 741.09,241 741.54,242 741.98,243 742.41,244 742.83,245 743.24,246 743.63,247 744.01,248 744.37,249 744.72,250 745.05,251 745.36,252 745.65,253 745.92,254 746.17,255 746.40,256 746.61,257 746.79,258 746.95,259 747.09,260 747.20,261 747.29,262 747.35,263 747.39,264 747.40,265 747.39,266 747.35,267 747.29,268 747.20,269 747.09,270 746.95,271 746.79,272 746.61,273 746.40,274 746.17,275 745.92,276 745.65,277 745.36,278 745.05,279 744.72,280 744.37,281 744.01,282 743.63,283 743.24,284 742.83,285 742.41,286 741.98,287 741.54,288 741.09,289 740.64,290 740.18,291 739.71,292 739.25,293 738.78,294 738.31,295 737.84,296 737.37,297 736.90,298 736.45,299 735.99,300 735.55,301 735.11,302 734.68,303 734.27,304 733.86,305 733.48,306 733.10,307 732.74,308 732.40,309 732.07,310 731.77,311 731.48,312 731.21,313 730.97,314 730.75,315 730.54,316 730.37,317 730.21,318 730.08,319 729.98,320 729.89,321 729.84,322 729.81,323 729.80,324 729.82,325 729.86,326 729.93,327 730.03,328 730.14,329 730.29,330 730.45,331 730.64,332 730.85,333 731.09,334 731.34,335 731.62,336 731.92,337 732.23,338 732.57,339 732.92,340 733.29,341 733.67,342 734.06,343 734.47,344 734.90,345 735.33,346 735.77,347 736.22,348 736.67,349 737.14,350 737.60,351 738.07,352 738.54,353 739.01,354 739.48,355 739.95,356 740.41,357 740.87,358 741.32,359 741.76,360 742.20,361 742.62,362 743.03,363 743.43,364 743.82,365 744.19,366 744.55,367 744.88,368 745.20,369 745.51,370 745.79,371 746.05,372 746.29,373 746.51,374 746.70,375 746.87,376 747.02,377 747.15,378 747.25,379 747.32,380 747.37,381 747.40,382 747.40,383 747.37,384 747.32,385 747.25,386 747.15,387 747.02,388 746.87,389 746.70,390 746.51,391 746.29,392 746.05,393 745.79,394 745.51,395 745.20,396 744.88,397 744.55,398 744.19,399 743.82,400 743.43,401 743.03,402 742.62,403 742.20,404 741.76,405 741.32,406 740.87,407 740.41,408 739.95,409 739.48,410 739.01,411 738.54,412 738.07,413 737.60,414 737.14,415 736.67,416 736.22,417 735.77,418 735.33,419 734.90,420 734.47,421 734.06,422 733.67,423 733.29,424 732.92,425 732.57,426 732.23,427 731.92,428 731.62,429 731.34,430 731.09,431 730.85,432 730.64,433 730.45,434 730.29,435 730.14,436 730.03,437 729.93,438 729.86,439 729.82,440 729.80,441 729.81,442 729.84,443 729.89,444 729.98,445 730.08,446 730.21,447 730.37,448 730.54,449 730.75,450 730.97,451 731.21,452 731.48,453 731.77,454 732.07,455 732.40,456 732.74,457 733.10,458 733.48,459 733.86,460 734.27,461 734.68,462 735.11,463 735.55,464 735.99,465 736.45,466 736.90,467 737.37,468 737.84,469 738.31,470 738.78,471 739.25,472 739.71,473 740.18,474 740.64,475 741.09,476 741.54,477 741.98,478 742.41,479 742.83,480 788.58,480 788.18,479 787.77,478 787.34,477 786.91,476 786.47,475 786.03,474 785.58,473 785.12,472 784.67,471 784.22,470 783.76,469 783.31,468 782.86,467 782.42,466 781.98,465 781.55,464 781.13,463 780.72,462 780.32,461 779.93,460 779.55,459 779.19,458 778.84,457 778.51,456 778.20,455 777.90,454 777.62,453 777.37,452 777.13,451 776.91,450 776.72,449 776.55,448 776.40,447 776.27,446 776.17,445 776.09,444 776.04,443 776.01,442 776.00,441 776.02,440 776.06,439 776.13,438 776.22,437 776.33,436 776.47,435 776.63,434 776.81,433 777.02,432 777.25,431 777.49,430 777.76,429 778.05,428 778.35,427 778.67,426 779.01,425 779.37,424 779.74,423 780.12,422 780.52,421 780.92,420 781.34,419 781.77,418 782.20,417 782.64,416 783.09,415 783.54,414 783.99,413 784.44,412 784.90,411 785.35,410 785.80,409 786.25,408 786.69,407 787.13,406 787.55,405 787.97,404 788.38,403 788.78,402 789.17,401 789.54,400 789.90,399 790.24,398 790.57,397 790.88,396 791.17,395 791.44,394 791.69,393 791.93,392 792.14,391 792.33,390 792.49,389 792.64,388 792.76,387 792.85,386 792.92,385 792.97,384 793.00,383 793.00,382 792.97,381 792.92,380 792.85,379 792.76,378 792.64,377 792.49,376 792.33,375 792.14,374 791.93,373 791.69,372 791.44,371 791.17,370 790.88,369 790.57,368 790.24,367 789.90,366 789.54,365 789.17,364 788.78,363 788.38,362 787.97,361 787.55,360 787.13,359 786.69,358 786.25,357 785.80,356 785.35,355 784.90,354 784.44,353 783.99,352 783.54,351 783.09,350 782.64,349 782.20,348 781.77,347 781.34,346 780.92,345 780.52,344 780.12,343 779.74,342 779.37,341 779.01,340 778.67,339 778.35,338 778.05,337 777.76,336 777.49,335 777.25,334 777.02,333 776.81,332 776.63,331 776.47,330 776.33,329 776.22,328 776.13,327 776.06,326 776.02,325 776.00,324 776.01,323 776.04,322 776.09,321 776.17,320 776.27,319 776.40,318 776.55,317 776.72,316 776.91,315 777.13,314 777.37,313 777.62,312 777.90,311 778.20,310 778.51,309 778.84,308 779.19,307 779.55,306 779.93,305 780.32,304 780.72,303 781.13,302 781.55,301 781.98,300 782.42,299 782.86,298 783.31,297 783.76,296 784.22,295 784.67,294 785.12,293 785.58,292 786.03,291 786.47,290 786.91,289 787.34,288 787.77,287 788.18,286 788.58,285 788.98,284 789.36,283 789.72,282 790.07,281 790.41,280 790.73,279 791.03,278 791.31,277 791.57,276 791.81,275 792.03,274 792.23,273 792.41,272 792.57,271 792.70,270 792.81,269 792.89,268 792.95,267 792.99,266 793.00,265 792.99,264 792.95,263 792.89,262 792.81,261 792.70,260 792.57,259 792.41,258 792.23,257 792.03,256 791.81,255 791.57,254 791.31,253 791.03,252 790.73,251 790.41,250 790.07,249 789.72,248 789.36,247 788.98,246 788.58,245 788.18,244 787.77,243 787.34,242 786.91,241 786.47,240 786.03,239 785.58,238 785.12,237 784.67,236 784.22,235 783.76,234 783.31,233 782.86,232 782.42,231 781.98,230 781.55,229 781.13,228 780.72,227 780.32,226 779.93,225 779.55,224 779.19,223 778.84,222 778.51,221 778.20,220 777.90,219 777.62,218 777.37,217 777.13,216 776.91,215 776.72,214 776.55,213 776.40,212 776.27,211 776.17,210 776.09,209 776.04,208 776.01,207 776.00,206 776.02,205 776.06,204 776.13,203 776.22,202 776.33,201 776.47,200 776.63,199 776.81,198 777.02,197 777.25,196 777.49,195 777.76,194 778.05,193 778.35,192 778.67,191 779.01,190 779.37,189 779.74,188 780.12,187 780.52,186 780.92,185 781.34,184 781.77,183 782.20,182 782.64,181 783.09,180 783.54,179 783.99,178 784.44,177 784.90,176 785.35,175 785.80,174 786.25,173 786.69,172 787.13,171 787.55,170 787.97,169 788.38,168 788.78,167 789.17,166 789.54,165 789.90,164 790.24,163 790.57,162 790.88,161 791.17,160 791.44,159 791.69,158 791.93,157 792.14,156 792.33,155 792.49,154 792.64,153 792.76,152 792.85,151 792.92,150 792.97,149 793.00,148 793.00,147 792.97,146 792.92,145 792.85,144 792.76,143 792.64,142 792.49,141 792.33,140 792.14,139 791.93,138 791.69,137 791.44,136 791.17,135 790.88,134 790.57,133 790.24,132 789.90,131 789.54,130 789.17,129 788.78,128 788.38,127 787.97,126 787.55,125 787.13,124 786.69,123 786.25,122 785.80,121 785.35,120 784.90,119 784.44,118 783.99,117 783.54,116 783.09,115 782.64,114 782.20,113 781.77,112 781.34,111 780.92,110 780.52,109 780.12,108 779.74,107 779.37,106 779.01,105 778.67,104 778.35,103 778.05,102 777.76,101 777.49,100 777.25,99 777.02,98 776.81,97 776.63,96 776.47,95 776.33,94 776.22,93 776.13,92 776.06,91 776.02,90 776.00,89 776.01,88 776.04,87 776.09,86 776.17,85 776.27,84 776.40,83 776.55,82 776.72,81 776.91,80 777.13,79 777.37,78 777.62,77 777.90,76 778.20,75 778.51,74 778.84,73 779.19,72 779.55,71 779.93,70 780.32,69 780.72,68 781.13,67 781.55,66 781.98,65 782.42,64 782.86,63 783.31,62 783.76,61 784.22,60 784.67,59 785.12,58 785.58,57 786.03,56 786.47,55 786.91,54 787.34,53 787.77,52 788.18,51 788.58,50 788.98,49 789.36,48 789.72,47 790.07,46 790.41,45 790.73,44 791.03,43 791.31,42 791.57,41 791.81,40 792.03,39 792.23,38 792.41,37 792.57,36 792.70,35 792.81,34 792.89,33 792.95,32 792.99,31 793.00,30 792.99,29 792.95,28 792.89,27 792.81,26 792.70,25 792.57,24 792.41,23 792.23,22 792.03,21 791.81,20 791.57,19 791.31,18 791.03,17 790.73,16 790.41,15 790.07,14 789.72,13 789.36,12 788.98,11 788.58,10 788.18,9 787.77,8 787.34,7 786.91,6 786.47,5 786.03,4 785.58,3 785.12,2 784.67,1 784.22,0" fill="#fff"/>
<g clip-path="url(#gap)"><g filter="url(#bl)">
<polygon points="600,-20 733.35,-20 733.57,-19 733.81,-18 734.08,-17 734.37,-16 734.67,-15 735.00,-14 735.34,-13 735.70,-12 736.08,-11 736.46,-10 736.87,-9 737.28,-8 737.71,-7 738.15,-6 738.59,-5 739.05,-4 739.50,-3 739.97,-2 740.44,-1 740.91,0 741.38,1 741.85,2 742.31,3 742.78,4 743.24,5 743.69,6 744.14,7 744.58,8 745.01,9 745.43,10 745.84,11 746.23,12 746.61,13 746.97,14 747.32,15 747.65,16 747.96,17 748.25,18 748.52,19 748.77,20 749.00,21 749.21,22 749.39,23 749.55,24 749.69,25 749.80,26 749.89,27 749.95,28 749.99,29 750.00,30 749.99,31 749.95,32 749.89,33 749.80,34 749.69,35 749.55,36 749.39,37 749.21,38 749.00,39 748.77,40 748.52,41 748.25,42 747.96,43 747.65,44 747.32,45 746.97,46 746.61,47 746.23,48 745.84,49 745.43,50 745.01,51 744.58,52 744.14,53 743.69,54 743.24,55 742.78,56 742.31,57 741.85,58 741.38,59 740.91,60 740.44,61 739.97,62 739.50,63 739.05,64 738.59,65 738.15,66 737.71,67 737.28,68 736.87,69 736.46,70 736.08,71 735.70,72 735.34,73 735.00,74 734.67,75 734.37,76 734.08,77 733.81,78 733.57,79 733.35,80 733.14,81 732.97,82 732.81,83 732.68,84 732.58,85 732.49,86 732.44,87 732.41,88 732.40,89 732.42,90 732.46,91 732.53,92 732.63,93 732.74,94 732.89,95 733.05,96 733.24,97 733.45,98 733.69,99 733.94,100 734.22,101 734.52,102 734.83,103 735.17,104 735.52,105 735.89,106 736.27,107 736.66,108 737.07,109 737.50,110 737.93,111 738.37,112 738.82,113 739.27,114 739.74,115 740.20,116 740.67,117 741.14,118 741.61,119 742.08,120 742.55,121 743.01,122 743.47,123 743.92,124 744.36,125 744.80,126 745.22,127 745.63,128 746.03,129 746.42,130 746.79,131 747.15,132 747.48,133 747.80,134 748.11,135 748.39,136 748.65,137 748.89,138 749.11,139 749.30,140 749.47,141 749.62,142 749.75,143 749.85,144 749.92,145 749.97,146 750.00,147 750.00,148 749.97,149 749.92,150 749.85,151 749.75,152 749.62,153 749.47,154 749.30,155 749.11,156 748.89,157 748.65,158 748.39,159 748.11,160 747.80,161 747.48,162 747.15,163 746.79,164 746.42,165 746.03,166 745.63,167 745.22,168 744.80,169 744.36,170 743.92,171 743.47,172 743.01,173 742.55,174 742.08,175 741.61,176 741.14,177 740.67,178 740.20,179 739.74,180 739.27,181 738.82,182 738.37,183 737.93,184 737.50,185 737.07,186 736.66,187 736.27,188 735.89,189 735.52,190 735.17,191 734.83,192 734.52,193 734.22,194 733.94,195 733.69,196 733.45,197 733.24,198 733.05,199 732.89,200 732.74,201 732.63,202 732.53,203 732.46,204 732.42,205 732.40,206 732.41,207 732.44,208 732.49,209 732.58,210 732.68,211 732.81,212 732.97,213 733.14,214 733.35,215 733.57,216 733.81,217 734.08,218 734.37,219 734.67,220 735.00,221 735.34,222 735.70,223 736.08,224 736.46,225 736.87,226 737.28,227 737.71,228 738.15,229 738.59,230 739.05,231 739.50,232 739.97,233 740.44,234 740.91,235 741.38,236 741.85,237 742.31,238 742.78,239 743.24,240 743.69,241 744.14,242 744.58,243 745.01,244 745.43,245 745.84,246 746.23,247 746.61,248 746.97,249 747.32,250 747.65,251 747.96,252 748.25,253 748.52,254 748.77,255 749.00,256 749.21,257 749.39,258 749.55,259 749.69,260 749.80,261 749.89,262 749.95,263 749.99,264 750.00,265 749.99,266 749.95,267 749.89,268 749.80,269 749.69,270 749.55,271 749.39,272 749.21,273 749.00,274 748.77,275 748.52,276 748.25,277 747.96,278 747.65,279 747.32,280 746.97,281 746.61,282 746.23,283 745.84,284 745.43,285 745.01,286 744.58,287 744.14,288 743.69,289 743.24,290 742.78,291 742.31,292 741.85,293 741.38,294 740.91,295 740.44,296 739.97,297 739.50,298 739.05,299 738.59,300 738.15,301 737.71,302 737.28,303 736.87,304 736.46,305 736.08,306 735.70,307 735.34,308 735.00,309 734.67,310 734.37,311 734.08,312 733.81,313 733.57,314 733.35,315 733.14,316 732.97,317 732.81,318 732.68,319 732.58,320 732.49,321 732.44,322 732.41,323 732.40,324 732.42,325 732.46,326 732.53,327 732.63,328 732.74,329 732.89,330 733.05,331 733.24,332 733.45,333 733.69,334 733.94,335 734.22,336 734.52,337 734.83,338 735.17,339 735.52,340 735.89,341 736.27,342 736.66,343 737.07,344 737.50,345 737.93,346 738.37,347 738.82,348 739.27,349 739.74,350 740.20,351 740.67,352 741.14,353 741.61,354 742.08,355 742.55,356 743.01,357 743.47,358 743.92,359 744.36,360 744.80,361 745.22,362 745.63,363 746.03,364 746.42,365 746.79,366 747.15,367 747.48,368 747.80,369 748.11,370 748.39,371 748.65,372 748.89,373 749.11,374 749.30,375 749.47,376 749.62,377 749.75,378 749.85,379 749.92,380 749.97,381 750.00,382 750.00,383 749.97,384 749.92,385 749.85,386 749.75,387 749.62,388 749.47,389 749.30,390 749.11,391 748.89,392 748.65,393 748.39,394 748.11,395 747.80,396 747.48,397 747.15,398 746.79,399 746.42,400 746.03,401 745.63,402 745.22,403 744.80,404 744.36,405 743.92,406 743.47,407 743.01,408 742.55,409 742.08,410 741.61,411 741.14,412 740.67,413 740.20,414 739.74,415 739.27,416 738.82,417 738.37,418 737.93,419 737.50,420 737.07,421 736.66,422 736.27,423 735.89,424 735.52,425 735.17,426 734.83,427 734.52,428 734.22,429 733.94,430 733.69,431 733.45,432 733.24,433 733.05,434 732.89,435 732.74,436 732.63,437 732.53,438 732.46,439 732.42,440 732.40,441 732.41,442 732.44,443 732.49,444 732.58,445 732.68,446 732.81,447 732.97,448 733.14,449 733.35,450 733.57,451 733.81,452 734.08,453 734.37,454 734.67,455 735.00,456 735.34,457 735.70,458 736.08,459 736.46,460 736.87,461 737.28,462 737.71,463 738.15,464 738.59,465 739.05,466 739.50,467 739.97,468 740.44,469 740.91,470 741.38,471 741.85,472 742.31,473 742.78,474 743.24,475 743.69,476 744.14,477 744.58,478 745.01,479 745.43,480 745.84,481 746.23,482 746.61,483 746.97,484 747.32,485 747.65,486 747.96,487 748.25,488 748.52,489 748.77,490 749.00,491 749.21,492 749.39,493 749.55,494 749.69,495 749.80,496 749.89,497 749.95,498 749.99,499 750.00,500 600,500" fill="#747474"/>
</g>
</g>
<polygon points="784.6,2 787.6,2 786.9,6.5" fill="#17998e"/>
</svg>
<div class="ab" style="left:700px;top:470px;width:120px;height:10px;background:#fff"></div>
<svg class="ab" style="left:160px;top:440px" width="100" height="100" viewBox="160 440 100 100"><path d="M180.3 454.8 L229 505.5" stroke="#f64342" stroke-width="5.3" stroke-linecap="round"/><path d="M240.8 519.9 L222.3 512.8 L235.2 501.7 Z" fill="#f64342"/></svg>
<div class="ab" style="left:250px;top:481px;width:892.8px;height:372px;background:#fff"></div>
<div class="ab" style="left:250px;top:481px;width:892.8px;height:39.5px;background:#0072c6"></div>
<div class="ab" style="left:250px;top:481px;width:33px;height:19.7px;background:#0066b8"></div>
<div class="ab" style="left:262px;top:486.85px;width:9.5px;height:0.9px;background:#fff"></div>
<div class="ab" style="left:262px;top:490.85px;width:9.5px;height:0.9px;background:#fff"></div>
<div class="ab" style="left:262px;top:494.85px;width:9.5px;height:0.9px;background:#fff"></div>
<svg class="ab" style="left:289.5px;top:485.5px" width="11" height="11" viewBox="0 0 11 11"><path d="M1 1 H8.3 L10 2.7 V10 H1 Z" fill="none" stroke="#fff" stroke-width="0.9"/><path d="M3 1 V4.2 H7.5 V1 M5.8 1.8 V3.4 M2.8 10 V6.5 H8.2 V10" fill="none" stroke="#fff" stroke-width="0.8"/></svg>
<svg class="ab" style="left:313.5px;top:489px" width="5" height="4" viewBox="0 0 5 4"><path d="M0.5 1 H4.5 L2.5 3 Z" fill="#cfe3f5"/></svg>
<div class="t" style="left:850.5px;top:487px;color:#fff;font-size:8px;font-weight:bold;letter-spacing:-0.06px">Library - Estimate</div>
<div class="t g2" style="left:257.6px;top:506.5px;color:#fff;transform:scaleX(.89)">File</div>
<div class="t g2" style="left:287.5px;top:506.5px;color:#fff;transform:scaleX(.89)">Setup</div>
<div class="t g2" style="left:328.2px;top:506.5px;color:#fff;transform:scaleX(.89)">Estimate</div>
<div class="t g2" style="left:377.7px;top:506.5px;color:#fff;transform:scaleX(.89)">System</div>
<div class="t g2" style="left:423.5px;top:506.5px;color:#fff;transform:scaleX(.89)">Integrations</div>
<div class="ab" style="left:474.2px;top:500.7px;width:45.3px;height:20px;background:#f8f8f8"></div>
<div class="t g2" style="left:485.5px;top:506.5px;color:#222;transform:scaleX(.89)">Actions</div>
<div class="ab" style="left:250px;top:520.5px;width:892.8px;height:66.5px;background:#f8f8f8"></div>
<div class="ab" style="left:250px;top:587px;width:892.8px;height:1px;background:#c8c8c8"></div>
<div class="ab" style="left:324px;top:522px;width:1px;height:65px;background:#d8d8d8"></div>
<div class="ab" style="left:471px;top:522px;width:1px;height:65px;background:#d8d8d8"></div>
<div class="ab" style="left:596px;top:522px;width:1px;height:65px;background:#d8d8d8"></div>
<div class="ab" style="left:659px;top:522px;width:1px;height:65px;background:#d8d8d8"></div>
<div class="ab" style="left:767px;top:522px;width:1px;height:65px;background:#d8d8d8"></div>
<div class="ab" style="left:876px;top:522px;width:1px;height:65px;background:#d8d8d8"></div>
<div class="t" style="left:237px;width:100px;text-align:center;top:576.6px;font-size:8.6px;font-weight:bold;color:#6e6e6e;transform:scaleX(.9);transform-origin:50% 0">Print</div>
<div class="t" style="left:347.8px;width:100px;text-align:center;top:576.6px;font-size:8.6px;font-weight:bold;color:#6e6e6e;transform:scaleX(.9);transform-origin:50% 0">Layouts</div>
<div class="t" style="left:483.6px;width:100px;text-align:center;top:576.6px;font-size:8.6px;font-weight:bold;color:#6e6e6e;transform:scaleX(.9);transform-origin:50% 0">Edit</div>
<div class="t" style="left:577.8px;width:100px;text-align:center;top:576.6px;font-size:8.6px;font-weight:bold;color:#6e6e6e;transform:scaleX(.9);transform-origin:50% 0">Workbook</div>
<div class="t" style="left:663.6px;width:100px;text-align:center;top:576.6px;font-size:8.6px;font-weight:bold;color:#6e6e6e;transform:scaleX(.9);transform-origin:50% 0">View</div>
<div class="t" style="left:771.8px;width:100px;text-align:center;top:576.6px;font-size:8.6px;font-weight:bold;color:#6e6e6e;transform:scaleX(.9);transform-origin:50% 0">InEight Platform</div>
<div class="ab" style="left:326.2px;top:521.7px;width:48.8px;height:51.5px;background:#dcdcdc"></div>
<svg class="ab" style="left:255.5px;top:524.5px" width="12" height="12" viewBox="0 0 12 12"><rect x="2.7" y="0.7" width="6.6" height="4" fill="none" stroke="#3d6aa0" stroke-width="1.2"/><rect x="0.5" y="4.3" width="11" height="4.2" fill="#3d6aa0"/><rect x="2.6" y="7.2" width="6.8" height="4.2" fill="#f8f8f8" stroke="#3d6aa0" stroke-width="1.1"/></svg>
<svg class="ab" style="left:255.5px;top:541.5px" width="13" height="13" viewBox="0 0 13 13"><rect x="2.7" y="0.7" width="6.6" height="4" fill="none" stroke="#8aa5c8" stroke-width="1.1"/><rect x="0.5" y="4.3" width="10" height="4" fill="#3d6aa0"/><rect x="2.6" y="7.2" width="5" height="3.4" fill="#8aa5c8"/><circle cx="8.3" cy="8.6" r="2.4" fill="#f8f8f8" stroke="#2ea84a" stroke-width="1.3"/><path d="M10 10.4 L12 12.4" stroke="#2ea84a" stroke-width="1.4"/></svg>
<svg class="ab" style="left:255.5px;top:559px" width="13" height="13" viewBox="0 0 13 13"><path d="M1 4 H8 V11.5 H1 Z" fill="none" stroke="#3d6aa0" stroke-width="1.3"/><path d="M2.5 6 H6.5 M2.5 8 H6.5" stroke="#3d6aa0" stroke-width="1"/><rect x="6.3" y="0.3" width="6" height="6" fill="#2ea84a"/><path d="M7.8 1.6 L10.8 5 M10.8 1.6 L7.8 5" stroke="#fff" stroke-width="0.9"/></svg>
<div class="t g2" style="left:269.8px;top:526.7px">Print</div>
<div class="t g2" style="left:269.8px;top:543.9px">Preview</div>
<div class="t g2" style="left:269.8px;top:561.2px">Export to Excel</div>
<svg class="ab" style="left:340px;top:525.5px" width="14" height="14" viewBox="0 0 14 14"><path d="M0.5 1 H2 L3.5 9.5 Q4 11.5 6 10.5 L11 8" fill="none" stroke="#3d6aa0" stroke-width="1.1"/><rect x="5.3" y="0.7" width="6" height="7.2" fill="#fff" stroke="#3d6aa0" stroke-width="1.1"/><path d="M6.8 3 H9.8 M6.8 5 H9.8" stroke="#3d6aa0" stroke-width="0.8"/><circle cx="4.3" cy="12.3" r="1" fill="#3d6aa0"/></svg>
<svg class="ab" style="left:348.5px;top:533.3px" width="13" height="14" viewBox="0 0 13 14"><path d="M0.7 0.5 V13" stroke="#2ea84a" stroke-width="1" stroke-dasharray="1.5 1"/><rect x="2.5" y="0.7" width="9.8" height="12.4" fill="#fff" stroke="#2ea84a" stroke-width="1.2"/><circle cx="7.4" cy="5.2" r="1.8" fill="#2ea84a"/><path d="M4.5 10.5 Q4.8 7.6 7.4 7.6 Q10 7.6 10.3 10.5 Z" fill="#2ea84a"/></svg>
<svg class="ab" style="left:392.5px;top:525.5px" width="14" height="14" viewBox="0 0 14 14"><path d="M0.5 1 H2 L3.5 9.5 Q4 11.5 6 10.5 L11 8" fill="none" stroke="#2ea84a" stroke-width="1.1"/><rect x="5.3" y="0.7" width="6" height="7.2" fill="#fff" stroke="#2ea84a" stroke-width="1.1"/><path d="M6.8 3 H9.8 M6.8 5 H9.8" stroke="#2ea84a" stroke-width="0.8"/><circle cx="4.3" cy="12.3" r="1" fill="#2ea84a"/></svg>
<svg class="ab" style="left:400.5px;top:533.8px" width="14" height="12" viewBox="0 0 14 12"><ellipse cx="8.5" cy="6.2" rx="5" ry="3.5" fill="#3d6aa0"/><path d="M10 8.5 L12.5 11.3 L8.5 9.5 Z" fill="#3d6aa0"/><ellipse cx="5.8" cy="4.2" rx="5" ry="3.5" fill="#fff" stroke="#3d6aa0" stroke-width="1.1"/><path d="M2.8 6.8 L1.8 10 L5.5 7.5" fill="#fff" stroke="#3d6aa0" stroke-width="1"/></svg>
<svg class="ab" style="left:440px;top:524.7px" width="22" height="22" viewBox="0 0 22 22"><path d="M1.3 0.5 V21.5" stroke="#3d6aa0" stroke-width="1.4" stroke-dasharray="3.5 1.5"/><rect x="4.4" y="1" width="16.5" height="20" fill="#fff" stroke="#3d6aa0" stroke-width="1.5"/><path d="M7.2 4.5 H18 M7.2 7.5 H18 M7.2 10.5 H18" stroke="#3d6aa0" stroke-width="1.3"/></svg>
<div class="t g2 gc" style="left:310.6px;width:80px;text-align:center;top:553.6px">Vendors and</div>
<div class="t g2 gc" style="left:310.6px;width:80px;text-align:center;top:562.8px">Contacts</div>
<div class="t g2 gc" style="left:363.4px;width:80px;text-align:center;top:553.6px">Vendors and</div>
<div class="t g2 gc" style="left:363.4px;width:80px;text-align:center;top:562.8px">Default Quotes</div>
<div class="t g2 gc" style="left:410.5px;width:80px;text-align:center;top:553.6px">Contacts</div>
<svg class="ab" style="left:477.5px;top:525.3px" width="11" height="11" viewBox="0 0 11 11"><circle cx="5.5" cy="5.5" r="5.2" fill="#c4c4c4"/><path d="M3.3 3.3 L7.7 7.7 M7.7 3.3 L3.3 7.7" stroke="#fff" stroke-width="1.1"/></svg>
<svg class="ab" style="left:478px;top:542px" width="11" height="11" viewBox="0 0 11 11"><rect x="0.5" y="0.5" width="6.5" height="6.5" fill="#e8e8e8" stroke="#b0b0b0" stroke-width="1"/><rect x="3.5" y="3.5" width="7" height="7" fill="#c8c8c8" stroke="#b0b0b0" stroke-width="1"/></svg>
<svg class="ab" style="left:477.5px;top:559.5px" width="11" height="11" viewBox="0 0 11 11"><path d="M0.7 10.5 V1" fill="none" stroke="#b0b0b0" stroke-width="1" stroke-dasharray="1.3 0.9"/><path d="M0.5 0.7 H10" stroke="#b0b0b0" stroke-width="1"/><path d="M6 4 V9.5 M3.3 6.8 H8.7" stroke="#b0b0b0" stroke-width="0.9"/></svg>
<div class="t g2" style="left:491.8px;top:526.7px;color:#8a8a8a">Delete</div>
<div class="t g2" style="left:491.8px;top:543.9px;color:#8a8a8a">Copy</div>
<div class="t g2" style="left:491.8px;top:561.2px;color:#8a8a8a">Fill Down</div>
<svg class="ab" style="left:529px;top:525px" width="12" height="11" viewBox="0 0 12 11"><path d="M0.5 3 H2 L3.3 8.3 H7.8 L8.8 4.5 H2.5" fill="none" stroke="#7f98c2" stroke-width="1"/><path d="M3.2 5.8 H8" stroke="#a8b8d6" stroke-width="0.8"/><circle cx="3.8" cy="10" r="0.9" fill="#7f98c2"/><circle cx="7.3" cy="10" r="0.9" fill="#7f98c2"/><circle cx="9.2" cy="1.4" r="1.3" fill="#2ea84a"/><path d="M6.8 5.2 L9.2 2.8 L11.6 5.2" fill="none" stroke="#2ea84a" stroke-width="1.2"/></svg>
<div class="t g2" style="left:542.4px;top:526.7px">Merge Vendors</div>
<svg class="ab" style="left:603px;top:525px" width="12" height="12" viewBox="0 0 12 12"><rect x="3.5" y="0.5" width="5" height="6" fill="none" stroke="#c0c0c0" stroke-width="1"/><path d="M1.5 7.5 Q0.5 11 4 11 H8 Q11.5 11 10.5 7.5" fill="none" stroke="#c0c0c0" stroke-width="1.2"/></svg>
<svg class="ab" style="left:603px;top:542px" width="12" height="12" viewBox="0 0 12 12"><rect x="3.5" y="0.5" width="5" height="6" fill="none" stroke="#c0c0c0" stroke-width="1"/><path d="M1.5 7.5 Q0.5 11 4 11 M8 11 Q11.5 11 10.5 7.5" fill="none" stroke="#c0c0c0" stroke-width="1.2"/></svg>
<div class="t g2" style="left:616.1px;top:526.7px;color:#8a8a8a">Link Field</div>
<div class="t g2" style="left:616.1px;top:543.9px;color:#8a8a8a">UnLink Field</div>
<svg class="ab" style="left:671.5px;top:524.5px" width="24" height="23" viewBox="0 0 24 23"><path d="M3.5 13.5 L14 3" stroke="#1e9e3e" stroke-width="1.8"/><path d="M1.5 15.8 L2.3 9.8 L7.5 15 Z M15.8 1.2 L9.8 2 L15 7.2 Z" fill="#1e9e3e"/><path d="M22 6 L18 10 M7.5 21.5 L11 18" stroke="#3d6aa0" stroke-width="1.8"/><path d="M15.2 13.2 L15.6 8 L20.4 12.8 Z M13.8 14.6 L13.4 19.8 L8.6 15 Z" fill="#3d6aa0"/></svg>
<svg class="ab" style="left:709.5px;top:524.8px" width="22" height="22" viewBox="0 0 22 22"><path d="M0.8 0.5 H21 L14.2 8.6 H7.4 Z M7.4 11.2 H14.2 V18.6 L7.4 20.8 Z" fill="#3d6aa0"/></svg>
<svg class="ab" style="left:740px;top:524.8px" width="22" height="22" viewBox="0 0 22 22"><path d="M0.8 0.5 H21 L14.2 8.6 H7.4 Z M7.4 11.2 H14.2 V18.6 L7.4 20.8 Z" fill="#3d6aa0"/><circle cx="16" cy="15.5" r="5.3" fill="#e2171f"/><path d="M13 15.5 H19" stroke="#fff" stroke-width="1.8"/></svg>
<div class="t g2 gc" style="left:642px;width:80px;text-align:center;top:553.6px">Expand /</div>
<div class="t g2 gc" style="left:643px;width:80px;text-align:center;top:562.8px">Collapse &nbsp;&nbsp;</div>
<div class="t g2 gc" style="left:679.6px;width:80px;text-align:center;top:553.6px">Filter</div>
<div class="t g2 gc" style="left:710.2px;width:80px;text-align:center;top:553.6px">Clear</div>
<div class="t g2 gc" style="left:710.2px;width:80px;text-align:center;top:562.8px">Filter</div>
<div class="t g2 gc" style="left:754.4px;width:80px;text-align:center;top:553.6px">View Vendors</div>
<div class="t g2 gc" style="left:807.5px;width:80px;text-align:center;top:553.6px">View Contacts</div>
<svg class="ab" style="left:698px;top:564.5px" width="5" height="3" viewBox="0 0 5 3"><path d="M0 0 H5 L2.5 2.8 Z" fill="#333"/></svg>
<svg class="ab" style="left:717px;top:564.5px" width="5" height="3" viewBox="0 0 5 3"><path d="M0 0 H5 L2.5 2.8 Z" fill="#333"/></svg>
<svg class="ab" style="left:784.5px;top:524.8px" width="14" height="14" viewBox="0 0 14 14"><path d="M0.5 0.8 Q1.8 0.8 2 2.5 L3.3 10 Q3.6 11.8 5.5 11 L11 8.5" fill="none" stroke="#2ea84a" stroke-width="1.1"/><path d="M5 1 H11.5 V7 L10 8.6 H5 Z" fill="#2ea84a"/><path d="M6.8 3.2 H9.5 M6.8 5.2 H9.5" stroke="#fff" stroke-width="0.9"/><circle cx="4.3" cy="12.5" r="1" fill="#2ea84a"/></svg>
<svg class="ab" style="left:792.5px;top:535.5px" width="14" height="10" viewBox="0 0 14 10"><path d="M0.8 5 Q7 -2 13.2 5 Q7 12 0.8 5 Z" fill="#f8f8f8" stroke="#3d6aa0" stroke-width="1"/><circle cx="7" cy="5" r="1.3" fill="#3d6aa0"/></svg>
<svg class="ab" style="left:836.5px;top:524.5px" width="13" height="14" viewBox="0 0 13 14"><path d="M0.7 0.5 V13" stroke="#2ea84a" stroke-width="1" stroke-dasharray="1.5 1"/><rect x="2.5" y="0.7" width="9.8" height="12.4" fill="#fff" stroke="#2ea84a" stroke-width="1.2"/><circle cx="7.4" cy="5.2" r="1.8" fill="#2ea84a"/><path d="M4.5 10.5 Q4.8 7.6 7.4 7.6 Q10 7.6 10.3 10.5 Z" fill="#2ea84a"/></svg>
<svg class="ab" style="left:844.7px;top:535.5px" width="14" height="10" viewBox="0 0 14 10"><path d="M0.8 5 Q7 -2 13.2 5 Q7 12 0.8 5 Z" fill="#f8f8f8" stroke="#3d6aa0" stroke-width="1"/><circle cx="7" cy="5" r="1.3" fill="#3d6aa0"/></svg>
<div class="ab" style="left:250px;top:588px;width:892.8px;height:20px;background:#efefef"></div>
<div class="ab" style="left:250px;top:607px;width:892.8px;height:1.6px;background:#c6c6c6"></div>
<div class="ab" style="left:251.5px;top:589.5px;width:112px;height:18.5px;background:#f7f7f7;border:1px solid #d4d4d4;border-bottom:none;border-radius:1px 1px 0 0"></div>
<div class="t" style="left:257.4px;top:594.6px;font-size:8px;font-weight:bold;color:#222;letter-spacing:-0.2px">Address Book Register</div>
<svg class="ab" style="left:350px;top:594.5px" width="8" height="8" viewBox="0 0 8 8"><circle cx="4" cy="4" r="3.5" fill="#555"/><path d="M2.5 2.5 L5.5 5.5 M5.5 2.5 L2.5 5.5" stroke="#fff" stroke-width="1"/></svg>
<div class="ab" style="left:252px;top:608px;width:1px;height:245px;background:#b8b8b8"></div>
<div class="t g2" style="left:255.8px;top:615.6px;color:#8a8a8a">Drag columns here to group</div>
<div class="ab" style="left:253.5px;top:629.7px;width:889px;height:24.5px;background:#f7f7f7"></div>
<div class="ab" style="left:253.5px;top:629.2px;width:889px;height:1px;background:#e2e2e2"></div>
<div class="ab" style="left:269px;top:654.2px;width:873px;height:199px;background:#f4f4f4"></div>
<div class="ab" style="left:253.5px;top:653.7px;width:889px;height:1px;background:#d8d8d8"></div>
<div class="ab" style="left:268.5px;top:629.7px;width:1px;height:224px;background:#dedede"></div>
<div class="ab" style="left:344.5px;top:629.7px;width:1px;height:224px;background:#dedede"></div>
<div class="ab" style="left:513.8px;top:629.7px;width:1px;height:224px;background:#dedede"></div>
<div class="ab" style="left:589.3px;top:629.7px;width:1px;height:224px;background:#dedede"></div>
<div class="ab" style="left:634.1px;top:629.7px;width:1px;height:224px;background:#dedede"></div>
<div class="ab" style="left:705.7px;top:629.7px;width:1px;height:224px;background:#dedede"></div>
<div class="ab" style="left:836.2px;top:629.7px;width:1px;height:224px;background:#dedede"></div>
<div class="ab" style="left:891.8px;top:629.7px;width:1px;height:224px;background:#dedede"></div>
<div class="ab" style="left:1012.9px;top:629.7px;width:1px;height:224px;background:#dedede"></div>
<div class="ab" style="left:1090.9px;top:629.7px;width:1px;height:224px;background:#dedede"></div>
<div class="ab" style="left:1142.0px;top:629.7px;width:1px;height:224px;background:#dedede"></div>
<div class="t g2" style="left:272.9px;top:638px;color:#333">Vendor ID</div>
<div class="t g2" style="left:348.7px;top:638px;color:#333">Vendor Name</div>
<div class="t g2" style="left:518.3px;top:638px;color:#333">Vendor Type</div>
<div class="t g2" style="left:593.4px;top:638px;color:#333">Tax ID</div>
<div class="t g2" style="left:638.6px;top:638px;color:#333">Tax Jurisdiction</div>
<div class="t g2" style="left:711.1px;top:638px;color:#333">Address 1</div>
<div class="t g2" style="left:840.9px;top:638px;color:#333">Address 2</div>
<div class="t g2" style="left:1017.8px;top:638px;color:#333">City</div>
<div class="t g2" style="left:1095.3px;top:638px;color:#333">State</div>
<div class="t g2" style="left:896.3px;top:634px;color:#333;line-height:8.6px">Country /<br>Region</div>
<svg class="ab" style="left:486px;top:638px" width="9" height="8" viewBox="0 0 9 8"><path d="M0.5 1.5 H3.5 M0.5 3.5 H5.5 M0.5 5.5 H7.5 M0.5 7.3 H8.5" stroke="#777" stroke-width="0.9" fill="none"/></svg>
<div class="ab" style="left:269px;top:668.9000000000001px;width:873px;height:1px;background:#dcdcdc"></div>
<div class="t" style="left:273px;top:656.8000000000001px;font-size:9px;color:#c0c0c0;-webkit-text-stroke:0.2px #c0c0c0">+</div>
<div class="t g2" style="left:284.4px;top:658.3000000000001px;color:#1515d0;text-decoration:underline">0010087554</div>
<div class="t g2" style="left:349.9px;top:658.3000000000001px">1 Alliance Geomatics LLC</div>
<div class="t g2" style="left:518.3px;top:658.3000000000001px">Z001</div>
<div class="t g2" style="left:593.4px;top:658.3000000000001px">461564451</div>
<div class="t g2" style="left:638.6px;top:658.3000000000001px">4803300400</div>
<div class="t g2" style="left:711.1px;top:658.3000000000001px">1261A 120th Ave NE</div>
<div class="t g2" style="left:896.3px;top:658.3000000000001px">United States Of America</div>
<div class="t g2" style="left:1017.8px;top:658.3000000000001px">Bellevue</div>
<div class="t g2" style="left:1095.3px;top:658.3000000000001px">Washington</div>
<div class="ab" style="left:269px;top:684.1000000000001px;width:873px;height:1px;background:#dcdcdc"></div>
<div class="t" style="left:273px;top:672.0000000000001px;font-size:9px;color:#333;-webkit-text-stroke:0.2px #333">+</div>
<div class="t g2" style="left:284.4px;top:673.5000000000001px;color:#1515d0;text-decoration:underline">1_NP - Vendor2</div>
<div class="t g2" style="left:349.9px;top:673.5000000000001px">1_NP - Vendor2</div>
<div class="t g2" style="left:518.3px;top:673.5000000000001px">1_NP Vendor</div>
<div class="t g2" style="left:593.4px;top:673.5000000000001px">12345</div>
<div class="t g2" style="left:638.6px;top:673.5000000000001px">abc</div>
<div class="t g2" style="left:711.1px;top:673.5000000000001px">90th Street</div>
<div class="t g2" style="left:896.3px;top:673.5000000000001px">United States Of America</div>
<div class="t g2" style="left:1017.8px;top:673.5000000000001px">Scottsdale</div>
<div class="t g2" style="left:1095.3px;top:673.5000000000001px">Arizona</div>
<div class="ab" style="left:269px;top:699.3000000000001px;width:873px;height:1px;background:#dcdcdc"></div>
<div class="t" style="left:273px;top:687.2px;font-size:9px;color:#333;-webkit-text-stroke:0.2px #333">+</div>
<div class="t g2" style="left:284.4px;top:688.7px;color:#1515d0;text-decoration:underline">1_NP - Vendor1</div>
<div class="t g2" style="left:349.9px;top:688.7px">1_Vendor1</div>
<div class="t g2" style="left:518.3px;top:688.7px">1_NP Vendor</div>
<div class="ab" style="left:269px;top:714.5000000000001px;width:873px;height:1px;background:#dcdcdc"></div>
<div class="t" style="left:273px;top:702.4000000000001px;font-size:9px;color:#333;-webkit-text-stroke:0.2px #333">+</div>
<div class="t g2" style="left:284.4px;top:703.9000000000001px;color:#1515d0;text-decoration:underline">1_NP - Vendor1</div>
<div class="t g2" style="left:349.9px;top:703.9000000000001px">1_Vendor1</div>
<div class="t g2" style="left:518.3px;top:703.9000000000001px">1_NP Vendor</div>
<div class="ab" style="left:269px;top:729.7px;width:873px;height:1px;background:#dcdcdc"></div>
<div class="t" style="left:273px;top:717.6px;font-size:9px;color:#c0c0c0;-webkit-text-stroke:0.2px #c0c0c0">+</div>
<div class="t g2" style="left:284.4px;top:719.1px;color:#1515d0;text-decoration:underline">0010099994</div>
<div class="t g2" style="left:349.9px;top:719.1px">10X Engineered Materials LLC</div>
<div class="t g2" style="left:518.3px;top:719.1px">Z001</div>
<div class="t g2" style="left:593.4px;top:719.1px">824568213</div>
<div class="t g2" style="left:638.6px;top:719.1px">1516913100</div>
<div class="t g2" style="left:711.1px;top:719.1px">1162 Mancheser Ave</div>
<div class="t g2" style="left:896.3px;top:719.1px">United States Of America</div>
<div class="t g2" style="left:1017.8px;top:719.1px">Wabash</div>
<div class="t g2" style="left:1095.3px;top:719.1px">Indiana</div>
<div class="ab" style="left:269px;top:744.9000000000001px;width:873px;height:1px;background:#dcdcdc"></div>
<div class="t" style="left:273px;top:732.8000000000001px;font-size:9px;color:#c0c0c0;-webkit-text-stroke:0.2px #c0c0c0">+</div>
<div class="t g2" style="left:284.4px;top:734.3000000000001px;color:#1515d0;text-decoration:underline">0010099994</div>
<div class="t g2" style="left:349.9px;top:734.3000000000001px">10X Engineered Materials LLC</div>
<div class="t g2" style="left:518.3px;top:734.3000000000001px">Z001</div>
<div class="t g2" style="left:593.4px;top:734.3000000000001px">824568213</div>
<div class="t g2" style="left:638.6px;top:734.3000000000001px">1516913100</div>
<div class="t g2" style="left:711.1px;top:734.3000000000001px">1162 Mancheser Ave</div>
<div class="t g2" style="left:896.3px;top:734.3000000000001px">United States Of America</div>
<div class="t g2" style="left:1017.8px;top:734.3000000000001px">Wabash</div>
<div class="t g2" style="left:1095.3px;top:734.3000000000001px">Indiana</div>
<div class="ab" style="left:269px;top:760.1000000000001px;width:873px;height:1px;background:#dcdcdc"></div>
<div class="t" style="left:273px;top:748.0000000000001px;font-size:9px;color:#c0c0c0;-webkit-text-stroke:0.2px #c0c0c0">+</div>
<div class="t g2" style="left:284.4px;top:749.5000000000001px;color:#1515d0;text-decoration:underline">0010119449</div>
<div class="t g2" style="left:349.9px;top:749.5000000000001px">11032119 Canada Inc</div>
<div class="t g2" style="left:518.3px;top:749.5000000000001px">Z001</div>
<div class="t g2" style="left:593.4px;top:749.5000000000001px">731900882</div>
<div class="t g2" style="left:638.6px;top:749.5000000000001px">7001509700</div>
<div class="t g2" style="left:711.1px;top:749.5000000000001px">300 Greenbank Road Suite 12</div>
<div class="t g2" style="left:896.3px;top:749.5000000000001px">Canada</div>
<div class="t g2" style="left:1017.8px;top:749.5000000000001px">Ottawa</div>
<div class="t g2" style="left:1095.3px;top:749.5000000000001px">Ontario</div>
<div class="ab" style="left:269px;top:775.3000000000001px;width:873px;height:1px;background:#dcdcdc"></div>
<div class="t" style="left:273px;top:763.2px;font-size:9px;color:#c0c0c0;-webkit-text-stroke:0.2px #c0c0c0">+</div>
<div class="t g2" style="left:284.4px;top:764.7px;color:#1515d0;text-decoration:underline">0010098991</div>
<div class="t g2" style="left:349.9px;top:764.7px">1105900 Ontario Ltd oa Fire Alert</div>
<div class="t g2" style="left:518.3px;top:764.7px">Z001</div>
<div class="t g2" style="left:593.4px;top:764.7px">898821194</div>
<div class="t g2" style="left:638.6px;top:764.7px">7001520100</div>
<div class="t g2" style="left:711.1px;top:764.7px">1-890 Taylor Creek Dr</div>
<div class="t g2" style="left:896.3px;top:764.7px">Canada</div>
<div class="t g2" style="left:1017.8px;top:764.7px">Orleans</div>
<div class="t g2" style="left:1095.3px;top:764.7px">Ontario</div>
<div class="ab" style="left:269px;top:790.5000000000001px;width:873px;height:1px;background:#dcdcdc"></div>
<div class="t" style="left:273px;top:778.4000000000001px;font-size:9px;color:#c0c0c0;-webkit-text-stroke:0.2px #c0c0c0">+</div>
<div class="t g2" style="left:284.4px;top:779.9000000000001px;color:#1515d0;text-decoration:underline">0010106673</div>
<div class="t g2" style="left:349.9px;top:779.9000000000001px">1107075 B.C. LTD</div>
<div class="t g2" style="left:518.3px;top:779.9000000000001px">Z001</div>
<div class="t g2" style="left:593.4px;top:779.9000000000001px">728732926</div>
<div class="t g2" style="left:638.6px;top:779.9000000000001px">7000328680</div>
<div class="t g2" style="left:711.1px;top:779.9000000000001px">15705 Old Richter Pass Road</div>
<div class="t g2" style="left:896.3px;top:779.9000000000001px">Canada</div>
<div class="t g2" style="left:1017.8px;top:779.9000000000001px">Osoyoos</div>
<div class="t g2" style="left:1095.3px;top:779.9000000000001px">British Colu...</div>
<div class="ab" style="left:269px;top:805.7px;width:873px;height:1px;background:#dcdcdc"></div>
<div class="t" style="left:273px;top:793.6px;font-size:9px;color:#c0c0c0;-webkit-text-stroke:0.2px #c0c0c0">+</div>
<div class="t g2" style="left:284.4px;top:795.1px;color:#1515d0;text-decoration:underline">0010097822</div>
<div class="t g2" style="left:349.9px;top:795.1px">11088009 Canada Inc</div>
<div class="t g2" style="left:518.3px;top:795.1px">Z003</div>
<div class="t g2" style="left:593.4px;top:795.1px">726543085</div>
<div class="t g2" style="left:638.6px;top:795.1px">7001906500</div>
<div class="t g2" style="left:711.1px;top:795.1px">PRIMARYAddress1</div>
<div class="t g2" style="left:840.9px;top:795.1px">PRIMARYAd...</div>
<div class="t g2" style="left:896.3px;top:795.1px">India</div>
<div class="t g2" style="left:1017.8px;top:795.1px">PRIMARYAddress1</div>
<div class="t g2" style="left:1095.3px;top:795.1px">Tamil Nadu</div>
<div class="ab" style="left:269px;top:820.9000000000001px;width:873px;height:1px;background:#dcdcdc"></div>
<div class="t" style="left:273px;top:808.8000000000001px;font-size:9px;color:#c0c0c0;-webkit-text-stroke:0.2px #c0c0c0">+</div>
<div class="t g2" style="left:284.4px;top:810.3000000000001px;color:#1515d0;text-decoration:underline">0010033404</div>
<div class="t g2" style="left:349.9px;top:810.3000000000001px">111008 Canada inc.</div>
<div class="t g2" style="left:518.3px;top:810.3000000000001px">Z002</div>
<div class="t g2" style="left:593.4px;top:810.3000000000001px">105815492</div>
<div class="t g2" style="left:638.6px;top:810.3000000000001px">7001565130</div>
<div class="t g2" style="left:711.1px;top:810.3000000000001px">6866 McKeown Dr-1</div>
<div class="t g2" style="left:896.3px;top:810.3000000000001px">Canada</div>
<div class="t g2" style="left:1017.8px;top:810.3000000000001px">Greely</div>
<div class="t g2" style="left:1095.3px;top:810.3000000000001px">Ontario</div>
<div class="ab" style="left:269px;top:836.1000000000001px;width:873px;height:1px;background:#dcdcdc"></div>
<div class="t" style="left:273px;top:824.0000000000001px;font-size:9px;color:#c0c0c0;-webkit-text-stroke:0.2px #c0c0c0">+</div>
<div class="t g2" style="left:284.4px;top:825.5000000000001px;color:#1515d0;text-decoration:underline">0010102467</div>
<div class="t g2" style="left:349.9px;top:825.5000000000001px">1112004 Ontario Inc</div>
<div class="t g2" style="left:518.3px;top:825.5000000000001px">Z001</div>
<div class="t g2" style="left:593.4px;top:825.5000000000001px">896930377</div>
<div class="t g2" style="left:638.6px;top:825.5000000000001px">7001568530</div>
<div class="t g2" style="left:711.1px;top:825.5000000000001px">5243 Robert Hogan Lane</div>
<div class="t g2" style="left:896.3px;top:825.5000000000001px">Canada</div>
<div class="t g2" style="left:1017.8px;top:825.5000000000001px">Seeley's Bay</div>
<div class="t g2" style="left:1095.3px;top:825.5000000000001px">Ontario</div>
<div class="ab" style="left:269px;top:851.3000000000001px;width:873px;height:1px;background:#dcdcdc"></div>
<div class="t" style="left:273px;top:839.2px;font-size:9px;color:#c0c0c0;-webkit-text-stroke:0.2px #c0c0c0">+</div>
<div class="t g2" style="left:284.4px;top:840.7px;color:#1515d0;text-decoration:underline">0010118762</div>
<div class="t g2" style="left:349.9px;top:840.7px">1123910 B.C. Ltd</div>
<div class="t g2" style="left:518.3px;top:840.7px">Z001</div>
<div class="t g2" style="left:593.4px;top:840.7px">708492095</div>
<div class="t g2" style="left:638.6px;top:840.7px">7000301500</div>
<div class="t g2" style="left:711.1px;top:840.7px">1016 Quails Roost Crt</div>
<div class="t g2" style="left:896.3px;top:840.7px">Canada</div>
<div class="t g2" style="left:1017.8px;top:840.7px">Kamloops</div>
<div class="t g2" style="left:1095.3px;top:840.7px">British Colu...</div>
</body></html>
